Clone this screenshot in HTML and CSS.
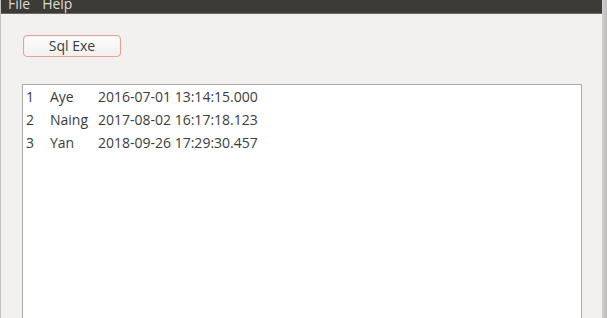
FILE: index.html
```html
<!DOCTYPE html>
<html>
<head>
<meta charset="utf-8">
<link rel="stylesheet" href="styles.css">
</head>
<body>
<div class="screen">
  <div class="app">
    <div class="menubar">
      <span class="menu-item">File</span>
      <span class="menu-item">Help</span>
    </div>
    <div class="content">
      <button class="btn">Sql Exe</button>
      <div class="list">
        <div class="row"><span class="c-num">1</span><span class="c-name">Aye</span><span class="c-date">2016-07-01 13:14:15.000</span></div>
        <div class="row"><span class="c-num">2</span><span class="c-name">Naing</span><span class="c-date">2017-08-02 16:17:18.123</span></div>
        <div class="row"><span class="c-num">3</span><span class="c-name">Yan</span><span class="c-date">2018-09-26 17:29:30.457</span></div>
      </div>
    </div>
  </div>
  <div class="edge"></div>
</div>
</body>
</html>
```
FILE: styles.css
```css
html, body {
  margin: 0;
  padding: 0;
  height: 100%;
  overflow: hidden;
}
body {
  background: #f2f1f0;
  font-family: "Open Sans", "Liberation Sans", sans-serif;
  color: #3c3c3c;
}
.screen {
  display: flex;
  height: 318px;
  width: 607px;
}
.app {
  width: 601px;
  border-left: 1px solid #c4c4c2;
  display: flex;
  flex-direction: column;
  overflow: hidden;
}
.edge {
  width: 5px;
  background: linear-gradient(to right, #cfcfcf, #bcbcbc);
}
.menubar {
  height: 13px;
  background: #3c3b37;
  border-bottom: 1px solid #6a6964;
  display: flex;
  align-items: flex-end;
  gap: 12px;
  padding-left: 7px;
  overflow: hidden;
  flex: none;
}
.menu-item {
  color: #dfdbd2;
  font-size: 14px;
  line-height: 14px;
  position: relative;
  top: -2px;
}
.content {
  flex: 1;
  display: flex;
  flex-direction: column;
  align-items: flex-start;
  padding: 21px 0 0 21px;
}
.btn {
  width: 98px;
  height: 22px;
  margin: 0 0 0 1px;
  padding: 0;
  border: 1px solid #dda592;
  border-radius: 4px;
  background: linear-gradient(to bottom, #fdfdfd, #f1f0ef);
  font-family: "Open Sans", "Liberation Sans", sans-serif;
  font-size: 14px;
  line-height: 20px;
  color: #3c3c3c;
  box-shadow: inset 0 0 0 1px #fbeee8;
}
.list {
  margin-top: 27px;
  flex: 1;
  background: #ffffff;
  border: 1px solid #a9a9a7;
  border-bottom: none;
  padding: 0 0 0 3px;
  box-sizing: border-box;
  width: 560px;
}
.row {
  display: flex;
  height: 23px;
  line-height: 23px;
  font-size: 14px;
  color: #3c3c3c;
}
.c-num { width: 24px; }
.c-name { width: 48px; }
.c-date { white-space: nowrap; }
```
